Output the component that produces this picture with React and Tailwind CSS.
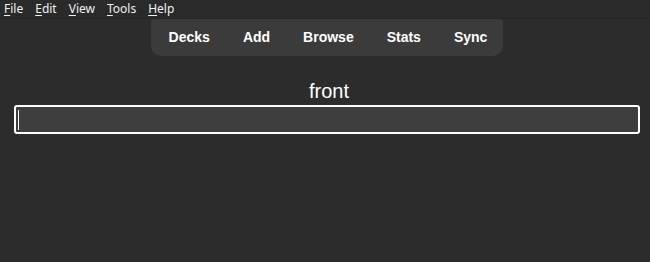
import React from 'react';

const menus = [
  { first: 'F', rest: 'ile' },
  { first: 'E', rest: 'dit' },
  { first: 'V', rest: 'iew' },
  { first: 'T', rest: 'ools' },
  { first: 'H', rest: 'elp' },
];

const links = ['Decks', 'Add', 'Browse', 'Stats', 'Sync'];

export default function App() {
  return (
    <div className="w-[650px] h-[262px] bg-[#2c2c2c] text-white flex flex-col overflow-hidden" style={{ fontFamily: '"Segoe UI", "Noto Sans", "Liberation Sans", sans-serif' }}>
      {/* Menu bar */}
      <div className="h-[19px] flex items-center bg-[#2a2a2a] border-b border-[#262626] pl-[4px] gap-[12px] text-[12px] leading-none text-[#f0f0f0]">
        {menus.map(m => (
          <span key={m.rest}>
            <span className="underline underline-offset-2">{m.first}</span>{m.rest}
          </span>
        ))}
      </div>

      {/* Top toolbar */}
      <div className="flex justify-center pl-[4px]">
        <div className="flex items-center gap-[33px] h-[37px] pl-[18px] pr-[16px] bg-[#3b3b3b] rounded-t-[4px] rounded-b-[10px] text-[14px] font-bold" style={{ fontFamily: '"Segoe UI", "Liberation Sans", sans-serif' }}>
          {links.map(l => (
            <span key={l}>{l}</span>
          ))}
        </div>
      </div>

      {/* Editor */}
      <div className="pl-[14px] pr-[10px] pt-[23px] flex flex-col">
        <div className="text-center text-[20px] leading-[24px] text-white pl-[4px]" style={{ fontFamily: '"Segoe UI", "Liberation Sans", sans-serif' }}>front</div>
        <div className="mt-[2px] h-[29px] rounded-[3px] border-2 border-white bg-[#3e3e3e] flex items-center pl-[2px]">
          <div className="w-px h-[20px] bg-white" />
        </div>
      </div>
    </div>
  );
}
